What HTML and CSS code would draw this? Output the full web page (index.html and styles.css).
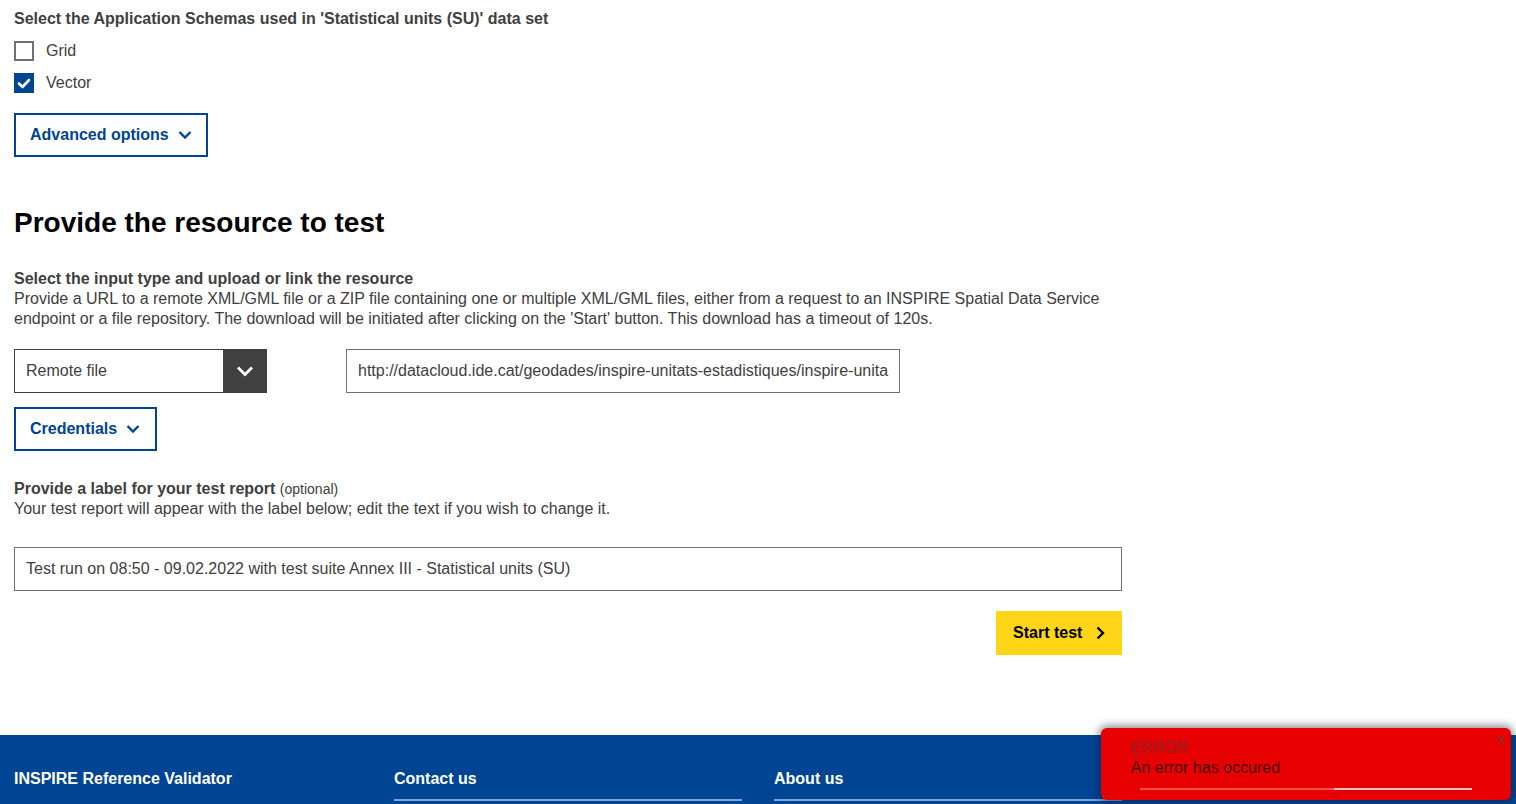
FILE: index.html
```html
<!DOCTYPE html>
<html lang="en">
<head>
<meta charset="utf-8">
<title>INSPIRE Reference Validator</title>
<link rel="stylesheet" href="styles.css">
</head>
<body>
<main class="page">
  <div class="form">
    <div class="field-title">Select the Application Schemas used in 'Statistical units (SU)' data set</div>
    <div class="checks">
      <label class="check"><span class="box"></span><span>Grid</span></label>
      <label class="check"><span class="box checked"><svg viewBox="0 0 20 20" width="20" height="20"><path d="M5 10.5 L8.5 14 L15 7" fill="none" stroke="#fff" stroke-width="2.6" stroke-linecap="round" stroke-linejoin="round"/></svg></span><span>Vector</span></label>
    </div>
    <button class="btn-outline adv">Advanced options <svg class="chev" viewBox="0 0 16 16" width="16" height="16"><path d="M2.5 5 L8 10.5 L13.5 5" fill="none" stroke="#004494" stroke-width="2.4"/></svg></button>

    <h2 class="section">Provide the resource to test</h2>

    <div class="field-title t2">Select the input type and upload or link the resource</div>
    <p class="help">Provide a URL to a remote XML/GML file or a ZIP file containing one or multiple XML/GML files, either from a request to an INSPIRE Spatial Data Service endpoint or a file repository. The download will be initiated after clicking on the 'Start' button. This download has a timeout of 120s.</p>

    <div class="input-row">
      <div class="select">
        <span class="select-text">Remote file</span>
        <span class="select-btn"><svg viewBox="0 0 20 20" width="20" height="20"><path d="M3 6.5 L10 13.5 L17 6.5" fill="none" stroke="#fff" stroke-width="2.8"/></svg></span>
      </div>
      <div class="text-input url">http://datacloud.ide.cat/geodades/inspire-unitats-estadistiques/inspire-unita</div>
    </div>
    <button class="btn-outline cred">Credentials <svg class="chev" viewBox="0 0 16 16" width="16" height="16"><path d="M2.5 5 L8 10.5 L13.5 5" fill="none" stroke="#004494" stroke-width="2.4"/></svg></button>

    <div class="field-title t3">Provide a label for your test report <span class="opt">(optional)</span></div>
    <p class="help">Your test report will appear with the label below; edit the text if you wish to change it.</p>
    <div class="text-input label-input">Test run on 08:50 - 09.02.2022 with test suite Annex III - Statistical units (SU)</div>

    <div class="actions">
      <button class="btn-start">Start test <svg viewBox="0 0 16 16" width="16" height="16"><path d="M5.5 2.5 L11 8 L5.5 13.5" fill="none" stroke="#000" stroke-width="2.4"/></svg></button>
    </div>
  </div>
</main>
<footer class="footer">
  <div class="fcol"><div class="ftitle">INSPIRE Reference Validator</div></div>
  <div class="fcol line"><div class="ftitle">Contact us</div></div>
  <div class="fcol line"><div class="ftitle">About us</div></div>
</footer>
<div class="toast">
  <div class="toast-title">ERROR</div>
  <div class="toast-msg">An error has occured</div>
  <span class="toast-close">x</span>
  <div class="toast-bar"><span class="bar-done"></span><span class="bar-left"></span></div>
</div>
</body>
</html>
```

FILE: styles.css
```css
* { box-sizing: border-box; }
html, body { margin: 0; padding: 0; }
body {
  font-family: "Liberation Sans", Arial, sans-serif;
  font-size: 16px;
  line-height: 20px;
  color: #404040;
  background: #fff;
  overflow: hidden;
}
.page { padding: 9px 14px 0 14px; }
.form { width: 1108px; display: flex; flex-direction: column; align-items: flex-start; }
.field-title { font-weight: bold; color: #404040; }
.checks { display: flex; flex-direction: column; gap: 12px; margin-top: 12px; }
.check { display: flex; align-items: center; gap: 12px; height: 20px; color: #404040; }
.box { width: 20px; height: 20px; border: 2px solid #707070; background: #fff; display: block; }
.box.checked { border: none; background: #004494; }
.box svg { display: block; }
.btn-outline {
  display: flex; align-items: center; gap: 8px;
  height: 44px; padding: 0 14px 0 14px;
  border: 2px solid #004494; background: #fff;
  color: #004494; font-family: inherit; font-size: 16px; font-weight: bold;
  white-space: nowrap;
}
.adv { margin-top: 20px; width: 194px; }
.cred { margin-top: 14px; width: 143px; }
.chev { display: block; flex: none; }
.section {
  margin: 49px 0 0 0; font-size: 28px; line-height: 34px; font-weight: bold; color: #000;
}
.t2 { margin-top: 29px; }
.help { margin: 0; color: #404040; }
.input-row { display: flex; margin-top: 20px; gap: 79px; }
.select {
  width: 253px; height: 44px; border: 1px solid #404040; display: flex; align-items: stretch;
}
.select-text { flex: 1; padding-left: 11px; display: flex; align-items: center; color: #404040; }
.select-btn { width: 44px; background: #404040; display: flex; align-items: center; justify-content: center; margin: -1px -1px -1px 0; }
.select-btn svg { display: block; }
.text-input {
  height: 44px; border: 1px solid #707070; padding: 0 11px; display: flex; align-items: center;
  white-space: nowrap; overflow: hidden; color: #404040; background: #fff;
}
.url { width: 554px; }
.t3 { margin-top: 28px; }
.opt { font-weight: normal; font-size: 14px; }
.label-input { width: 1108px; margin-top: 28px; }
.actions { width: 100%; display: flex; justify-content: flex-end; margin-top: 20px; }
.btn-start {
  display: flex; align-items: center; gap: 10px;
  height: 44px; width: 126px; padding: 0 0 0 17px;
  border: none; background: #ffd617; color: #000;
  font-family: inherit; font-size: 16px; font-weight: bold;
}
.btn-start svg { display: block; }
.footer {
  margin-top: 80px; background: #004494; height: 80px;
  display: flex; gap: 32px; padding: 34px 14px 0 14px;
}
.fcol { width: 348px; height: 32px; }
.fcol.line { border-bottom: 2px solid #7fa2dc; }
.ftitle { color: #fff; font-weight: bold; font-size: 16px; line-height: 20px; }
.toast {
  position: fixed; left: 1101px; top: 728px; width: 410px; height: 72px;
  background: #e60000; border-radius: 6px;
  box-shadow: 0 0 8px 2px rgba(20, 30, 50, 0.55);
  padding: 10px 0 0 30px;
}
.toast-title { font-weight: bold; color: #a31a1a; font-size: 16px; line-height: 20px; }
.toast-msg { color: #3a0000; font-size: 16px; line-height: 20px; }
.toast-close {
  position: absolute; right: 6px; top: 3px; font-size: 14px; font-weight: bold; color: #8a3030; line-height: 16px;
}
.toast-bar { position: absolute; left: 39px; top: 60px; width: 332px; height: 2px; display: flex; }
.bar-done { width: 194px; background: #ff5050; }
.bar-left { flex: 1; background: #f4c4c4; }
```
